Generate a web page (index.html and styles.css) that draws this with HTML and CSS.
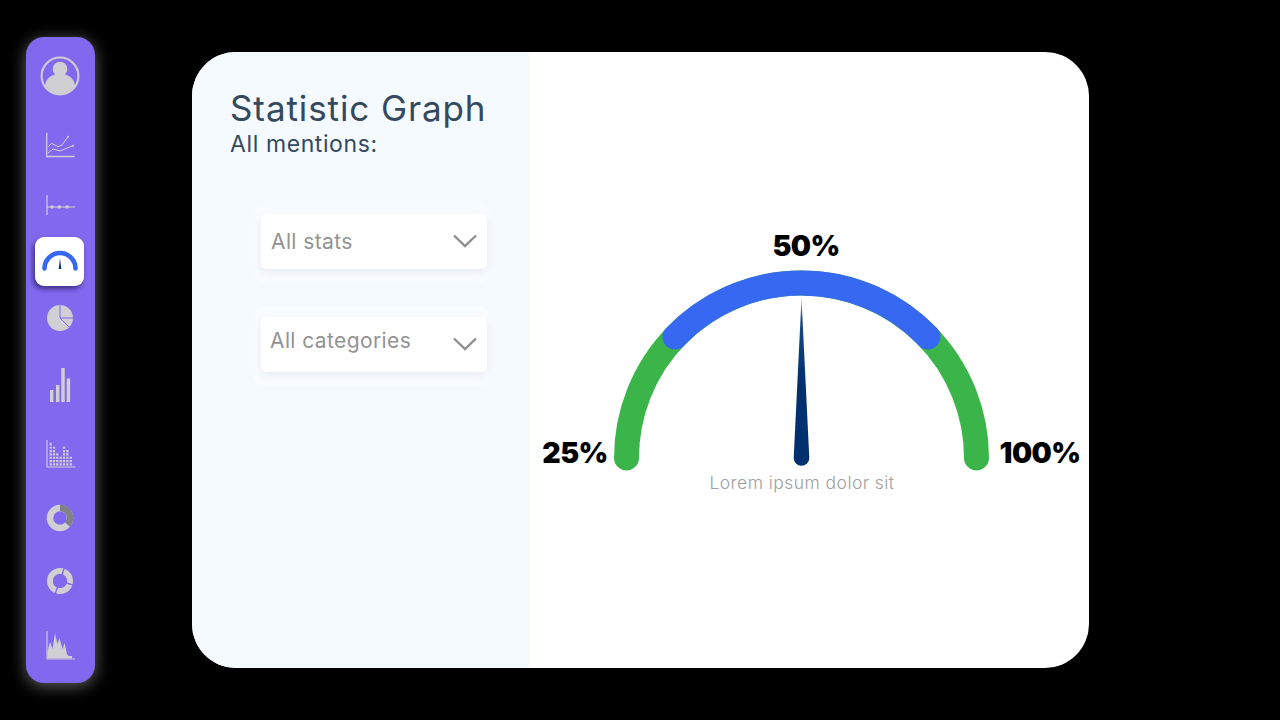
FILE: index.html
```html
<!DOCTYPE html>
<html lang="en">
<head>
<meta charset="utf-8">
<title>Statistic Graph</title>
<link rel="stylesheet" href="styles.css">
</head>
<body>
<main class="stage">
  <nav class="sidebar">
    <a class="nav-item">
      <svg class="icon" viewBox="0 0 40 40"><defs><clipPath id="av"><circle cx="20" cy="20" r="18"/></clipPath></defs><circle cx="20" cy="20" r="18.4" fill="none" stroke="#d0d0d4" stroke-width="2"/><g clip-path="url(#av)" fill="#d0d0d4"><circle cx="20" cy="13" r="7.3"/><path d="M5 40V31C5 22 12 18 20 18S35 22 35 31V40Z"/></g></svg>
    </a>
    <a class="nav-item">
      <svg class="icon" viewBox="0 0 40 40"><path d="M6.700 8V31.500H34.500" fill="none" stroke="#d0d0d4" stroke-width="1.300"/><path d="M8.300 21.700L11.700 18.300 18 21.700 22 20 28 11.700" fill="none" stroke="#d0d0d4"/><path d="M8 28L13 24 20 26 27 23 33 20.700" fill="none" stroke="#d0d0d4"/><circle cx="28" cy="11.700" r="1" fill="#d0d0d4"/><circle cx="33" cy="20.700" r="1" fill="#d0d0d4"/></svg>
    </a>
    <a class="nav-item">
      <svg class="icon" viewBox="0 0 40 40"><path d="M7 10V30M7 22H35" fill="none" stroke="#d0d0d4" stroke-width="1.200"/><circle cx="12" cy="22" r="1.800" fill="#d0d0d4"/><circle cx="19.300" cy="22" r="1.800" fill="#d0d0d4"/><circle cx="27" cy="22" r="1.800" fill="#d0d0d4"/></svg>
    </a>
    <a class="nav-item nav-item-active">
      <span class="tile">
        <svg class="icon" viewBox="0 0 40 40"><path d="M4.500 27.500A15.500 15.500 0 0 1 35.500 27.500" fill="none" stroke="#3668f2" stroke-width="4.600" stroke-linecap="round"/><path d="M20 17.500L21.300 28H18.700Z" fill="#00306e"/></svg>
      </span>
    </a>
    <a class="nav-item">
      <svg class="icon" viewBox="0 0 40 40"><circle cx="20" cy="20" r="13" fill="#d0d0d4"/><path d="M20 7V20H33M20 20L29.500 29.500" fill="none" stroke="#8069ee" stroke-width="1"/></svg>
    </a>
    <a class="nav-item">
      <svg class="icon" viewBox="0 0 40 40"><g fill="#d0d0d4"><rect x="10" y="25" width="3.400" height="12"/><rect x="16" y="20" width="3.400" height="17"/><rect x="21.300" y="3" width="3.400" height="34"/><rect x="26.700" y="13.500" width="3.400" height="23.500"/></g></svg>
    </a>
    <a class="nav-item">
      <svg class="icon" viewBox="0 0 40 40"><path d="M7 7V34H35.500" fill="none" stroke="#d0d0d4" stroke-width="1.100"/><g fill="none" stroke="#d0d0d4" stroke-width="2.200" stroke-dasharray="2.200 1.130"><path d="M10.700 32.500V9"/><path d="M14 32.500V13"/><path d="M17.300 32.500V19.500"/><path d="M20.700 32.500V23"/><path d="M24 32.500V13"/><path d="M27.300 32.500V16"/><path d="M30.700 32.500V23"/></g></svg>
    </a>
    <a class="nav-item">
      <svg class="icon" viewBox="0 0 40 40"><circle cx="20" cy="20" r="10" fill="none" stroke="#d0d0d4" stroke-width="6.500"/><path d="M20 10A10 10 0 0 1 27.500 26.600" fill="none" stroke="#808088" stroke-width="6.500"/></svg>
    </a>
    <a class="nav-item">
      <svg class="icon" viewBox="0 0 40 40"><circle cx="20" cy="20" r="10" fill="none" stroke="#d0d0d4" stroke-width="6"/><path d="M20 20L24.300 6.700M20 20L33.400 24.100M20 20L15 33.100" fill="none" stroke="#8069ee" stroke-width="1.400"/><circle cx="20" cy="20" r="7" fill="#8069ee"/></svg>
    </a>
    <a class="nav-item">
      <svg class="icon" viewBox="0 0 40 40"><path d="M7 6V34H35" fill="none" stroke="#d0d0d4" stroke-width="1.100"/><path d="M7.500 33.500V26L10 17 12.500 24 15 8.500 17.500 19 19.500 13 22.500 24 24.500 18 27 29 28.500 31H32V33.500Z" fill="#d0d0d4"/></svg>
    </a>
  </nav>

  <section class="card">
    <aside class="panel">
      <h1 class="title">Statistic Graph</h1>
      <p class="subtitle">All mentions:</p>
      <div class="filters">
        <div class="select-halo">
          <div class="select">
            <span class="select-label">All stats</span>
            <svg class="chevron" viewBox="0 0 24 14"><path d="M1 1.500L12 12 23 1.500" fill="none" stroke="#8f8f8f" stroke-width="2.400"/></svg>
          </div>
        </div>
        <div class="select-halo">
          <div class="select select-cat">
            <span class="select-label">All categories</span>
            <svg class="chevron" viewBox="0 0 24 14"><path d="M1 1.500L12 12 23 1.500" fill="none" stroke="#8f8f8f" stroke-width="2.400"/></svg>
          </div>
        </div>
      </div>
    </aside>
    <div class="chart">
      <svg class="gauge" viewBox="530 52 559 616">
        <defs>
          <linearGradient id="needle" x1="0" y1="0" x2="0" y2="1">
            <stop offset="0" stop-color="#8da4c4"/>
            <stop offset="0.12" stop-color="#1c4a82"/>
            <stop offset="0.5" stop-color="#00306e"/>
          </linearGradient>
        </defs>
        <path d="M626.500 458A175 175 0 0 1 976.500 458" fill="none" stroke="#3bb54a" stroke-width="25" stroke-linecap="round"/>
        <path d="M675 337A175 175 0 0 1 928 337" fill="none" stroke="#3668f2" stroke-width="25" stroke-linecap="round"/>
        <path d="M801.500 298L809.300 458A7.800 7.800 0 0 1 793.700 458Z" fill="url(#needle)"/>
        <text class="pct" x="806" y="256" text-anchor="middle">50%</text>
        <text class="pct" x="575" y="463" text-anchor="middle">25%</text>
        <text class="pct" x="1040" y="463" text-anchor="middle">100%</text>
        <text class="caption" x="802" y="489" text-anchor="middle">Lorem ipsum dolor sit</text>
      </svg>
    </div>
  </section>
</main>
</body>
</html>
```
FILE: styles.css
```css
* { box-sizing: border-box; }
html, body { margin: 0; height: 100%; background: #000; }
body { font-family: "Inter", "Liberation Sans", sans-serif; overflow: hidden; }

.stage {
  width: 1280px;
  height: 720px;
  padding: 37px 0 0 26px;
  display: flex;
  align-items: flex-start;
  background: #000;
}

.sidebar {
  flex: none;
  width: 69px;
  height: 646px;
  padding: 5px 2px 0 0;
  border-radius: 18px;
  background: #8069ee;
  box-shadow: 0 3px 16px rgba(255, 255, 255, 0.38);
  display: grid;
  grid-template-rows: 68px 70px 50px 62px 52px 82px 54px 76px 50px 77px;
  justify-items: center;
  align-items: center;
}
.nav-item { display: flex; align-items: center; justify-content: center; }
.icon { display: block; width: 40px; height: 40px; }
.tile {
  width: 49px;
  height: 49px;
  border-radius: 9px;
  background: #fff;
  box-shadow: -2px 3px 5px rgba(20, 10, 70, 0.6);
  display: flex;
  align-items: center;
  justify-content: center;
}

.card {
  flex: none;
  width: 897px;
  height: 616px;
  margin: 15px 0 0 97px;
  border-radius: 44px;
  background: #fff;
  overflow: hidden;
  display: flex;
}

.panel {
  flex: none;
  width: 338px;
  padding: 34px 0 0 38px;
  background: #f5faff;
  color: #34495e;
}
.title {
  margin: 0;
  font-size: 35px;
  line-height: 44px;
  font-weight: 400;
  letter-spacing: 0.9px;
  white-space: nowrap;
}
.subtitle {
  margin: -1px 0 0;
  font-size: 23px;
  line-height: 30px;
  font-weight: 400;
  letter-spacing: 0.6px;
}

.filters {
  margin: 44px 0 0 23px;
  width: 238px;
  display: flex;
  flex-direction: column;
  gap: 23px;
}
.select-halo {
  height: 80px;
  padding: 11px 4px 14px 8px;
  border-radius: 12px;
  background: #f9fcff;
}
.select {
  height: 55px;
  padding: 0 10px;
  border-radius: 5px;
  background: #fff;
  box-shadow: 0 3px 8px rgba(60, 70, 90, 0.1);
  display: flex;
  align-items: center;
  justify-content: space-between;
  color: #939393;
}
.select-label { font-size: 21px; line-height: 26px; letter-spacing: 0.4px; }
.select-cat .select-label { margin: -7px 0 0 -1px; }
.chevron { display: block; flex: none; width: 24px; height: 14px; margin-top: -1px; }

.chart { flex: 1; }
.gauge { display: block; width: 559px; height: 616px; }
.pct {
  font-family: "Inter", "Liberation Sans", sans-serif;
  font-size: 28.5px;
  font-weight: 900;
  letter-spacing: -0.6px;
  fill: #000;
}
.caption {
  font-family: "Inter", "Liberation Sans", sans-serif;
  font-size: 17.5px;
  font-weight: 300;
  letter-spacing: 0.45px;
  fill: #a0a0a0;
}
```
